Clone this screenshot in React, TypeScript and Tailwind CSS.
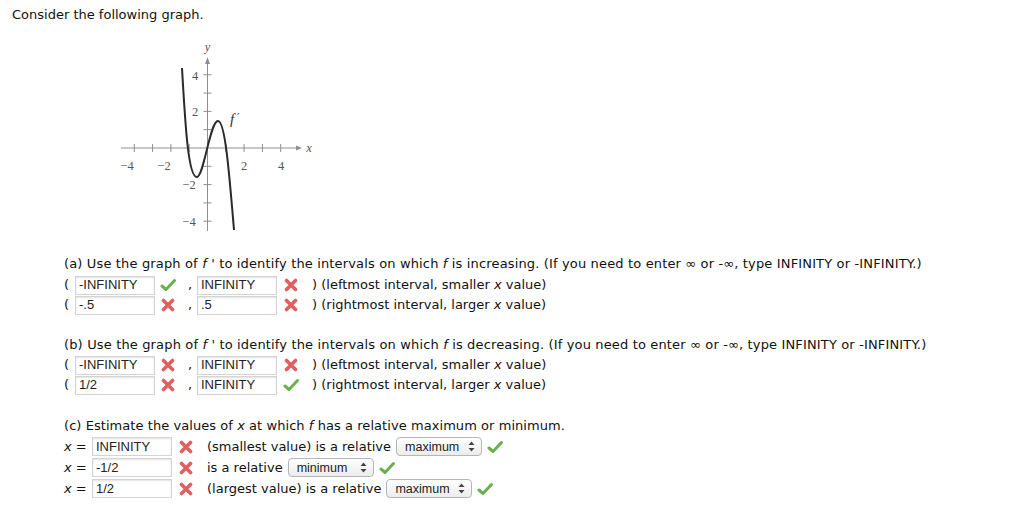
import React from 'react';

type Mark = 'ok' | 'bad';

// 정답/오답 표시 아이콘
function MarkIcon({ mark }: { mark: Mark }) {
  if (mark === 'ok') {
    return (
      <svg width="16" height="14" viewBox="0 0 16 14" className="block">
        <path d="M2 8 L6 11.5 L14.5 2.5" fill="none" stroke="#69b04f" strokeWidth="3" strokeLinecap="round" strokeLinejoin="round" />
      </svg>
    );
  }
  return (
    <svg width="16" height="14" viewBox="0 0 16 14" className="block">
      <path d="M3.5 2.5 L12.5 11.5 M12.5 2.5 L3.5 11.5" fill="none" stroke="#e35f5f" strokeWidth="3.6" strokeLinecap="round" />
    </svg>
  );
}

function Field({ value }: { value: string }) {
  return (
    <div className="flex h-[19px] w-[80px] items-center border border-[#d4d4d4] bg-white pl-[3px] font-['Liberation_Sans',Arial,sans-serif] text-[13px] text-[#222] shadow-[inset_0_1px_2px_rgba(0,0,0,0.12)]">
      {value}
    </div>
  );
}

function Picker({ value }: { value: string }) {
  return (
    <div className="flex h-[19px] w-[86px] items-center justify-between rounded-[4px] border border-[#b5b5b5] bg-gradient-to-b from-white to-[#ececec] pl-[8px] pr-[6px] font-['Liberation_Sans',Arial,sans-serif] text-[12.5px] text-[#222]">
      <span>{value}</span>
      <svg width="7" height="11" viewBox="0 0 7 11">
        <path d="M3.5 0.5 L6.5 4 L0.5 4 Z M3.5 10.5 L6.5 7 L0.5 7 Z" fill="#444" />
      </svg>
    </div>
  );
}

interface IntervalRowProps {
  left: string;
  leftMark: Mark;
  right: string;
  rightMark: Mark;
  note: React.ReactNode;
}

function IntervalRow({ left, leftMark, right, rightMark, note }: IntervalRowProps) {
  return (
    <div className="flex h-[20px] items-center">
      <span className="w-[11px]">(</span>
      <Field value={left} />
      <span className="ml-[5px] w-[28px]">
        <MarkIcon mark={leftMark} />
      </span>
      <span className="w-[9px]">,</span>
      <Field value={right} />
      <span className="ml-[6px] w-[29px]">
        <MarkIcon mark={rightMark} />
      </span>
      <span>) {note}</span>
    </div>
  );
}

function Graph() {
  const u = 18.3;
  const x0 = 207.5;
  const y0 = 148;
  const xs = [-4, -3, -2, -1, 1, 2, 3, 4];
  return (
    <svg width="200" height="196" viewBox="115 40 200 196" className="block">
      <g stroke="#8f8f8f" strokeWidth="1" fill="none">
        <line x1="121" y1={y0} x2="296" y2={y0} />
        <line x1={x0} y1="64" x2={x0} y2="231" />
        {xs.map((v) => (
          <line key={'x' + v} x1={x0 + v * u} y1={y0 - 4} x2={x0 + v * u} y2={y0 + 4} />
        ))}
        {xs.map((v) => (
          <line key={'y' + v} x1={x0 - 4} y1={y0 - v * u} x2={x0 + 4} y2={y0 - v * u} />
        ))}
      </g>
      <path d="M296 145.5 L302 148 L296 150.5 Z" fill="#8f8f8f" />
      <path d="M205 64 L207.5 57 L210 64 Z" fill="#8f8f8f" />
      <g fill="#555" fontFamily="'Liberation Serif', serif" fontSize="12.5" textAnchor="middle">
        <text x="127" y="170">−4</text>
        <text x="164" y="170">−2</text>
        <text x="244" y="170">2</text>
        <text x="281" y="170">4</text>
        <text x="195" y="79.5">4</text>
        <text x="195" y="116">2</text>
        <text x="189" y="189">−2</text>
        <text x="189" y="226">−4</text>
        <text x="207.5" y="51" fontStyle="italic">y</text>
        <text x="309" y="152" fontStyle="italic">x</text>
      </g>
      <text x="230" y="124" fill="#333" fontFamily="'Liberation Serif', serif" fontSize="15" fontStyle="italic">
        f
      </text>
      <text x="237" y="121" fill="#333" fontFamily="'DejaVu Sans', sans-serif" fontSize="11">
        ′
      </text>
      <path
        d="M182 68 C185 120 188 178 197 177 C204 176 210 121 218 121 C225 121 229 170 234 230"
        fill="none"
        stroke="#2a2a2a"
        strokeWidth="2"
      />
    </svg>
  );
}

export default function App() {
  return (
    <div className="min-h-[519px] bg-white px-[12px] pt-[7px] font-['DejaVu_Sans',Verdana,sans-serif] text-[13px] leading-[16px] text-[#111]">
      <p>Consider the following graph.</p>

      <div className="ml-[103px] mt-[17px]">
        <Graph />
      </div>

      <div className="ml-[52px]">
        {/* (a) 증가 구간 */}
        <p className="mb-[2px] mt-[19px] h-[18px] leading-[18px] tracking-[0.15px]">
          (a) Use the graph of <i>f</i> ' to identify the intervals on which <i>f</i> is increasing. (If you need to enter ∞ or -∞, type INFINITY or -INFINITY.)
        </p>
        <IntervalRow left="-INFINITY" leftMark="ok" right="INFINITY" rightMark="bad" note={<>(leftmost interval, smaller <i>x</i> value)</>} />
        <IntervalRow left="-.5" leftMark="bad" right=".5" rightMark="bad" note={<>(rightmost interval, larger <i>x</i> value)</>} />

        {/* (b) 감소 구간 */}
        <p className="mb-[1px] mt-[21px] h-[18px] leading-[18px] tracking-[0.15px]">
          (b) Use the graph of <i>f</i> ' to identify the intervals on which <i>f</i> is decreasing. (If you need to enter ∞ or -∞, type INFINITY or -INFINITY.)
        </p>
        <IntervalRow left="-INFINITY" leftMark="bad" right="INFINITY" rightMark="bad" note={<>(leftmost interval, smaller <i>x</i> value)</>} />
        <IntervalRow left="1/2" leftMark="bad" right="INFINITY" rightMark="ok" note={<>(rightmost interval, larger <i>x</i> value)</>} />

        {/* (c) 극대/극소 */}
        <p className="mb-[1px] mt-[22px] h-[18px] leading-[18px] tracking-[0.06px]">
          (c) Estimate the values of <i>x</i> at which <i>f</i> has a relative maximum or minimum.
        </p>
        {[
          { value: 'INFINITY', before: '(smallest value) is a relative', pick: 'maximum' },
          { value: '-1/2', before: 'is a relative', pick: 'minimum' },
          { value: '1/2', before: '(largest value) is a relative', pick: 'maximum' },
        ].map((row) => (
          <div key={row.value} className="flex h-[21px] items-center">
            <span className="w-[28px]">
              <i>x</i> =
            </span>
            <Field value={row.value} />
            <span className="ml-[6px] w-[29px]">
              <MarkIcon mark="bad" />
            </span>
            <span className="mr-[5px]">{row.before}</span>
            <Picker value={row.pick} />
            <span className="ml-[5px]">
              <MarkIcon mark="ok" />
            </span>
          </div>
        ))}
      </div>
    </div>
  );
}
